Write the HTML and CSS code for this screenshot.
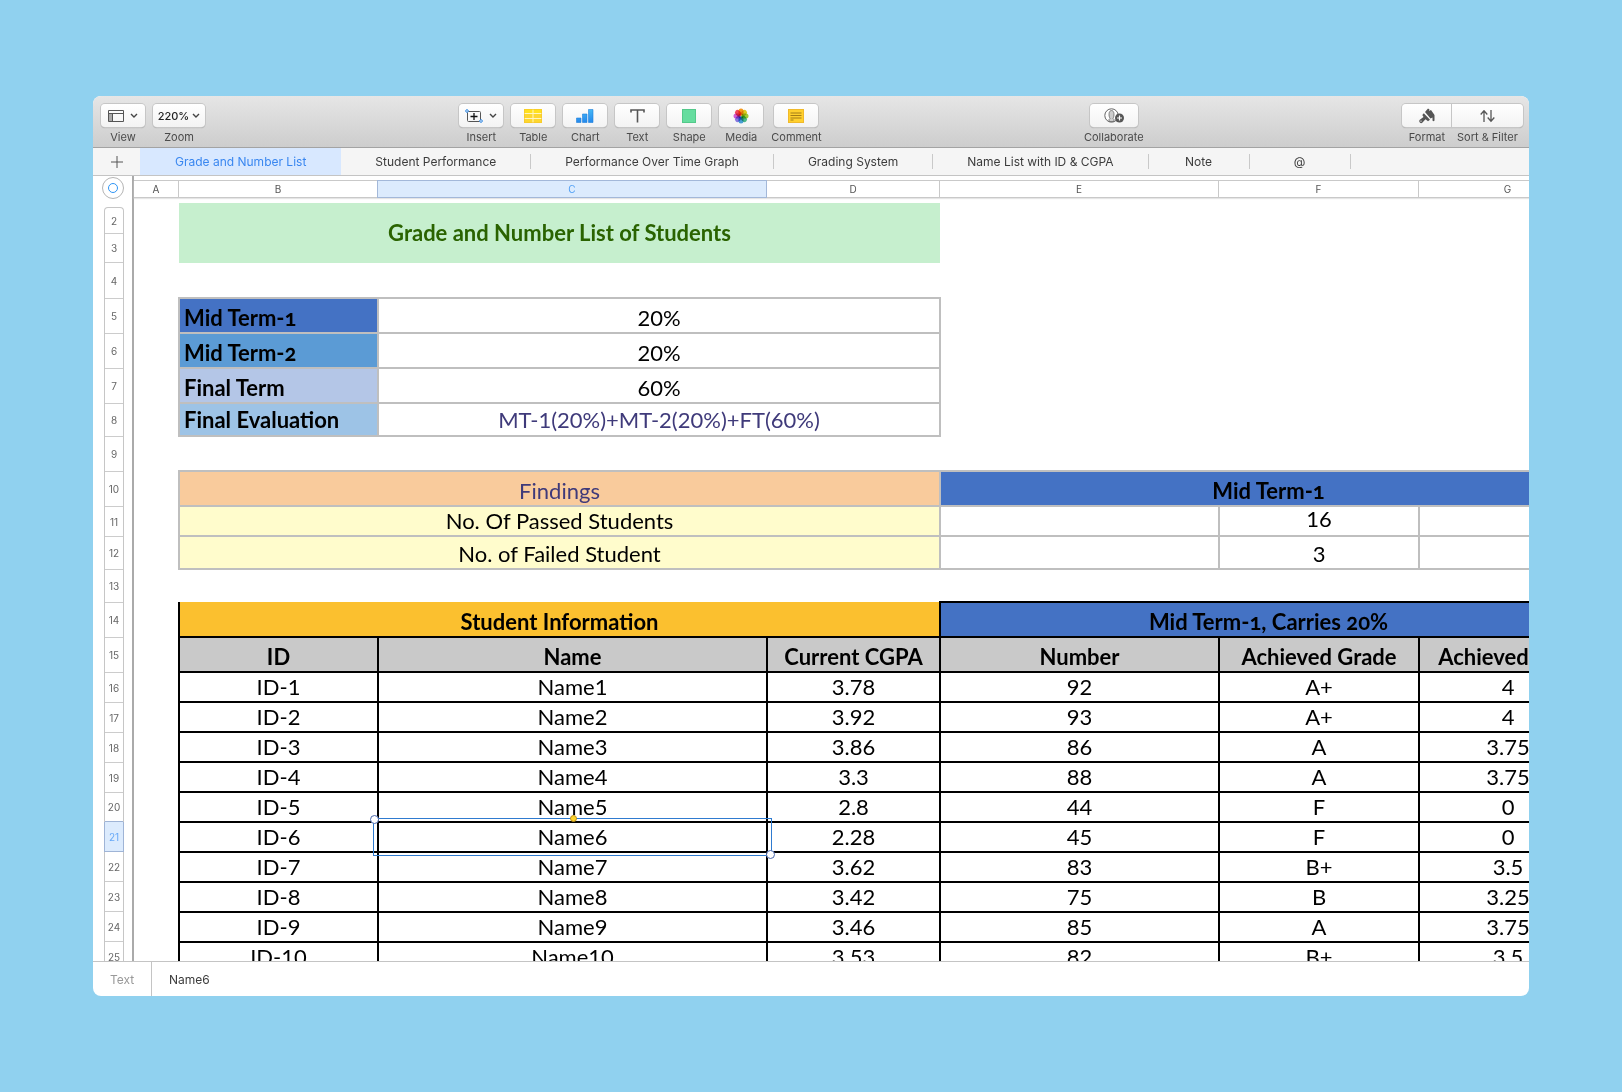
FILE: index.html
```html
<!DOCTYPE html>
<html lang="en">
<head>
    <meta charset="UTF-8">
    <meta name="viewport" content="width=device-width, initial-scale=1.0">
    <title>Grade and Number List</title>
    <link rel="stylesheet" href="styles.css">
</head>
<body>
    <div class="window">
        <header class="toolbar">
            <div class="tool-group">
                <div class="tool">
                    <button class="tool-btn" id="viewBtn" aria-labelledby="viewLabel">
                        <svg width="16" height="12" viewBox="0 0 16 12"><rect x="0.5" y="3" width="4" height="8.5" fill="#aaa"/><path d="M.5 .5h15v11H.5zM.5 3.5h15M4.5 3.5v8" fill="none" stroke="#555"/></svg>
                        <svg width="8" height="6" viewBox="0 0 8 6"><path d="M1 1l3 3 3-3" fill="none" stroke="#444" stroke-width="1.4"/></svg>
                    </button>
                    <span class="tool-label" id="viewLabel">View</span>
                </div>
                <div class="tool">
                    <button class="tool-btn zoom-btn" aria-describedby="zoomLabel">220%
                        <svg width="8" height="6" viewBox="0 0 8 6"><path d="M1 1l3 3 3-3" fill="none" stroke="#444" stroke-width="1.4"/></svg>
                    </button>
                    <span class="tool-label" id="zoomLabel">Zoom</span>
                </div>
            </div>

            <div class="tool-group insert-tools">
                <div class="tool">
                    <button class="tool-btn" aria-labelledby="insertLabel">
                        <svg width="18" height="14" viewBox="0 0 18 14"><rect x="2.5" y="2.5" width="13" height="10" rx="1" fill="none" stroke="#555"/><path d="M9 4v7M5.5 7.5h7" stroke="#111" stroke-width="1.3"/><circle cx="2" cy="2" r="1.3" fill="#fff" stroke="#2f86e0"/><circle cx="16" cy="12" r="1.3" fill="#fff" stroke="#2f86e0"/></svg>
                        <svg width="8" height="6" viewBox="0 0 8 6"><path d="M1 1l3 3 3-3" fill="none" stroke="#444" stroke-width="1.4"/></svg>
                    </button>
                    <span class="tool-label" id="insertLabel">Insert</span>
                </div>
                <div class="tool">
                    <button class="tool-btn" aria-labelledby="tableLabel">
                        <svg width="18" height="14" viewBox="0 0 18 14"><rect width="18" height="14" fill="#fdd72f"/><rect width="18" height="4" fill="#ffe11e"/><path d="M0 4.5h18M0 9.5h18M9 0v14" stroke="#fff6c0"/><path d="M.5 .5h17v13H.5z" fill="none" stroke="#f3c32a" stroke-width=".6"/></svg>
                    </button>
                    <span class="tool-label" id="tableLabel">Table</span>
                </div>
                <div class="tool">
                    <button class="tool-btn" aria-labelledby="chartLabel">
                        <svg width="18" height="14" viewBox="0 0 18 14"><defs><linearGradient id="bar" x1="0" y1="0" x2="0" y2="1"><stop offset="0" stop-color="#45b8f5"/><stop offset="1" stop-color="#2488ec"/></linearGradient></defs><path d="M.5 9H5v4.500H.5zM6.500 5H11v8.500H6.500zM12.500 .5H17v13h-4.500z" fill="url(#bar)" stroke="#1f7fdc" stroke-width=".6"/></svg>
                    </button>
                    <span class="tool-label" id="chartLabel">Chart</span>
                </div>
                <div class="tool">
                    <button class="tool-btn" aria-labelledby="textLabel">
                        <svg width="15" height="14" viewBox="0 0 15 14"><path d="M1 3.5V1h13v2.500M7.500 1v12.500" fill="none" stroke="#555" stroke-width="1.6"/></svg>
                    </button>
                    <span class="tool-label" id="textLabel">Text</span>
                </div>
                <div class="tool">
                    <button class="tool-btn" aria-labelledby="shapeLabel">
                        <svg width="14" height="14" viewBox="0 0 14 14"><rect x=".5" y=".5" width="13" height="13" fill="#66dd9f" stroke="#53c98a"/></svg>
                    </button>
                    <span class="tool-label" id="shapeLabel">Shape</span>
                </div>
                <div class="tool">
                    <button class="tool-btn" aria-labelledby="mediaLabel">
                        <svg class="petals" width="16" height="16" viewBox="-8 -8 16 16">
                            <rect x="-2.500" y="-7.500" width="5" height="7" rx="2.500" fill="#f89a1c"/>
                            <rect x="-2.500" y="-7.500" width="5" height="7" rx="2.500" fill="#e2cf1d" transform="rotate(45)"/>
                            <rect x="-2.500" y="-7.500" width="5" height="7" rx="2.500" fill="#a4d037" transform="rotate(90)"/>
                            <rect x="-2.500" y="-7.500" width="5" height="7" rx="2.500" fill="#4fc08d" transform="rotate(135)"/>
                            <rect x="-2.500" y="-7.500" width="5" height="7" rx="2.500" fill="#4aa5dc" transform="rotate(180)"/>
                            <rect x="-2.500" y="-7.500" width="5" height="7" rx="2.500" fill="#8b7be8" transform="rotate(225)"/>
                            <rect x="-2.500" y="-7.500" width="5" height="7" rx="2.500" fill="#d65fd8" transform="rotate(270)"/>
                            <rect x="-2.500" y="-7.500" width="5" height="7" rx="2.500" fill="#f4485a" transform="rotate(315)"/>
                        </svg>
                    </button>
                    <span class="tool-label" id="mediaLabel">Media</span>
                </div>
                <div class="tool">
                    <button class="tool-btn" aria-labelledby="commentLabel">
                        <svg width="16" height="14" viewBox="0 0 16 14"><rect x=".5" y=".5" width="15" height="13" fill="#ffd02e" stroke="#f0b92a"/><path d="M2.500 4h11M2.500 6.500h11M2.500 9h11M2.500 11h3" stroke="#9a7414" stroke-width=".9"/></svg>
                    </button>
                    <span class="tool-label" id="commentLabel">Comment</span>
                </div>
            </div>

            <div class="tool">
                <button class="tool-btn collab-btn" aria-labelledby="collabLabel">
                    <svg width="20" height="15" viewBox="0 0 20 15"><circle cx="7.500" cy="7.500" r="6.700" fill="#fff" stroke="#666"/><path d="M5 13.500v-2l1-1C4.500 8 4.500 2.500 7.500 2.500s3 5.500 1.500 8l1 1v2z" fill="#ccc" stroke="#666" stroke-width=".8"/><circle cx="15.500" cy="10" r="4.500" fill="#555"/><path d="M15.500 7.500v5M13 10h5" stroke="#fff" stroke-width="1.2"/></svg>
                </button>
                <span class="tool-label" id="collabLabel">Collaborate</span>
            </div>

            <div class="tool-group segmented">
                <div class="tool">
                    <button class="tool-btn" aria-labelledby="formatLabel">
                        <svg width="18" height="16" viewBox="0 0 18 16"><path d="M7 4L10 .5l1.500 1L11 3l2-1 3.500 5v5.500a1.200 1.200 0 0 1-2 0V9.500l-2 1z" fill="#555"/><path d="M5.800 5.200l6.200 6.500-2 1.500-2.500-2-3 3.300a1.900 1.900 0 1 1-2.700-2.700L5.500 9 4.300 7z" fill="#555"/><circle cx="3" cy="13.100" r=".7" fill="#fff"/></svg>
                    </button>
                    <span class="tool-label" id="formatLabel">Format</span>
                </div>
                <div class="tool">
                    <button class="tool-btn" aria-labelledby="sortLabel">
                        <svg width="15" height="14" viewBox="0 0 15 14"><path d="M4 13V2M.7 5.500L4 1.800l3.300 3.700M11 1v11M7.700 8.500l3.300 3.700 3.300-3.700" fill="none" stroke="#555" stroke-width="1.3"/></svg>
                    </button>
                    <span class="tool-label" id="sortLabel">Sort &amp; Filter</span>
                </div>
            </div>
        </header>

        <nav class="tabs">
            <button class="add-sheet" aria-label="Add sheet">
                <svg width="12" height="12" viewBox="0 0 12 12"><path d="M6 0v12M0 6h12" stroke="#555"/></svg>
            </button>
            <button class="tab active">Grade and Number List</button>
            <button class="tab">Student Performance</button>
            <button class="tab">Performance Over Time Graph</button>
            <button class="tab">Grading System</button>
            <button class="tab">Name List with ID &amp; CGPA</button>
            <button class="tab">Note</button>
            <button class="tab">@</button>
        </nav>

        <main class="sheet">
            <aside class="row-side">
                <button class="corner" aria-label="Select table"><span class="ring"></span></button>
                <ol class="row-heads">
                    <li class="h26">2</li>
                    <li class="h29">3</li>
                    <li class="h36">4</li>
                    <li class="h35">5</li>
                    <li class="h35">6</li>
                    <li class="h35">7</li>
                    <li class="h33">8</li>
                    <li class="h35">9</li>
                    <li class="h35">10</li>
                    <li class="h30">11</li>
                    <li class="h33">12</li>
                    <li class="h33">13</li>
                    <li class="h35">14</li>
                    <li class="h35">15</li>
                    <li class="h30">16</li>
                    <li class="h30">17</li>
                    <li class="h30">18</li>
                    <li class="h30">19</li>
                    <li class="h29">20</li>
                    <li class="h30 selected">21</li>
                    <li class="h30">22</li>
                    <li class="h30">23</li>
                    <li class="h30">24</li>
                    <li class="h30">25</li>
                </ol>
            </aside>

            <div class="grid">
                <div class="col-heads">
                    <span>A</span>
                    <span>B</span>
                    <span class="selected">C</span>
                    <span>D</span>
                    <span>E</span>
                    <span>F</span>
                    <span>G</span>
                </div>
                <table class="cells">
                    <colgroup>
                        <col class="col-a">
                        <col class="col-b">
                        <col class="col-c">
                        <col class="col-d">
                        <col class="col-e">
                        <col class="col-f">
                        <col class="col-g">
                    </colgroup>
                    <tbody>
                        <tr class="h30"><td></td><th class="title" colspan="3" rowspan="2">Grade and Number List of Students</th></tr>
                        <tr class="h30"><td></td></tr>
                        <tr class="h35"><td colspan="7"></td></tr>
                    </tbody>
                    <tbody class="weights">
                        <tr class="h35"><td class="blank"></td><th class="mid1">Mid Term-1</th><td colspan="2">20%</td></tr>
                        <tr class="h35"><td class="blank"></td><th class="mid2">Mid Term-2</th><td colspan="2">20%</td></tr>
                        <tr class="h35"><td class="blank"></td><th class="final">Final Term</th><td colspan="2">60%</td></tr>
                        <tr class="h33 middle"><td class="blank"></td><th class="evaluation">Final Evaluation</th><td class="purple" colspan="2">MT-1(20%)+MT-2(20%)+FT(60%)</td></tr>
                    </tbody>
                    <tbody>
                        <tr class="h35"><td colspan="7"></td></tr>
                    </tbody>
                    <tbody class="findings">
                        <tr class="h35"><td class="blank"></td><td class="findings-head purple" colspan="3">Findings</td><th class="mid1-wide" colspan="3">Mid Term-1</th></tr>
                        <tr class="h30"><td class="blank"></td><td class="count" colspan="3">No. Of Passed Students</td><td></td><td class="top">16</td><td></td></tr>
                        <tr class="h33"><td class="blank"></td><td class="count" colspan="3">No. of Failed Student</td><td></td><td>3</td><td></td></tr>
                    </tbody>
                    <tbody>
                        <tr class="h33"><td colspan="7"></td></tr>
                    </tbody>
                    <tbody class="students">
                        <tr class="h35"><td class="blank"></td><th class="info" colspan="3">Student Information</th><th class="mid1-wide" colspan="3">Mid Term-1, Carries 20%</th></tr>
                        <tr class="h35 head-row"><td class="blank"></td><th>ID</th><th>Name</th><th>Current CGPA</th><th>Number</th><th>Achieved Grade</th><th>Achieved GPA</th></tr>
                        <tr class="h30"><td class="blank"></td><td>ID-1</td><td>Name1</td><td>3.78</td><td>92</td><td>A+</td><td>4</td></tr>
                        <tr class="h30"><td class="blank"></td><td>ID-2</td><td>Name2</td><td>3.92</td><td>93</td><td>A+</td><td>4</td></tr>
                        <tr class="h30"><td class="blank"></td><td>ID-3</td><td>Name3</td><td>3.86</td><td>86</td><td>A</td><td>3.75</td></tr>
                        <tr class="h30"><td class="blank"></td><td>ID-4</td><td>Name4</td><td>3.3</td><td>88</td><td>A</td><td>3.75</td></tr>
                        <tr class="h29"><td class="blank"></td><td>ID-5</td><td>Name5</td><td>2.8</td><td>44</td><td>F</td><td>0</td></tr>
                        <tr class="h30"><td class="blank"></td><td>ID-6</td><td class="current">Name6<span class="selection"><span class="fill-handle"></span></span></td><td>2.28</td><td>45</td><td>F</td><td>0</td></tr>
                        <tr class="h30"><td class="blank"></td><td>ID-7</td><td>Name7</td><td>3.62</td><td>83</td><td>B+</td><td>3.5</td></tr>
                        <tr class="h30"><td class="blank"></td><td>ID-8</td><td>Name8</td><td>3.42</td><td>75</td><td>B</td><td>3.25</td></tr>
                        <tr class="h30"><td class="blank"></td><td>ID-9</td><td>Name9</td><td>3.46</td><td>85</td><td>A</td><td>3.75</td></tr>
                        <tr class="h30"><td class="blank"></td><td>ID-10</td><td>Name10</td><td>3.53</td><td>82</td><td>B+</td><td>3.5</td></tr>
                    </tbody>
                </table>
            </div>
        </main>

        <footer class="cell-bar">
            <label for="cellValue">Text</label>
            <input type="text" id="cellValue" value="Name6">
        </footer>
    </div>
</body>
</html>
```
FILE: styles.css
```css
* { margin: 0; padding: 0; box-sizing: border-box; }
body {
    font-family: Inter, sans-serif;
    font-size: 12px;
    color: #3c3c3c;
    background: #90d1ef;
    height: 100vh;
    display: flex;
    padding: 96px 93px;
}
button { font: inherit; color: inherit; border: none; background: none; }
.window {
    flex: 1;
    min-width: 0;
    display: flex;
    flex-direction: column;
    background: #fff;
    border-radius: 8px;
    overflow: hidden;
}

/* toolbar */
.toolbar {
    display: flex;
    justify-content: space-between;
    padding: 8px 6px 3px 8px;
    background: linear-gradient(#e6e6e6, #cdcdcd);
    border-bottom: 1px solid #a3a3a3;
}
.tool-group { display: flex; gap: 8px; }
.insert-tools { margin: 0 4px 0 -4px; }
.tool { display: flex; flex-direction: column; align-items: center; gap: 3px; }
.tool-btn {
    display: flex;
    align-items: center;
    justify-content: center;
    gap: 6px;
    min-width: 44px;
    height: 23px;
    background: linear-gradient(#fff, #f3f3f3);
    border-radius: 4px;
    box-shadow: 0 0 0 1px #c6c6c6, 0 1px 1px #999;
}
.zoom-btn { gap: 3px; width: 52px; font-size: 11px; font-weight: 500; color: #222; }
.collab-btn { width: 48px; }
.tool-label { font-size: 11px; line-height: 14px; color: #4a4a4a; }
.segmented { gap: 0; }
.segmented .tool-btn { width: 100%; }
.segmented .tool { width: 50px; }
.segmented .tool + .tool { width: 71px; }
.segmented .tool:first-child .tool-btn { border-radius: 4px 0 0 4px; }
.segmented .tool:last-child .tool-btn { border-radius: 0 4px 4px 0; }
.petals rect { mix-blend-mode: multiply; }

/* sheet tabs */
.tabs {
    display: flex;
    align-items: center;
    height: 28px;
    background: #f5f5f5;
    border-bottom: 1px solid #c4c4c4;
}
.add-sheet {
    display: flex;
    align-items: center;
    justify-content: center;
    width: 47px;
    height: 26px;
}
.tab {
    min-width: 101px;
    height: 15px;
    padding: 0 34px;
    line-height: 15px;
    white-space: nowrap;
    border-right: 1px solid #c9c9c9;
}
.tab.active {
    height: 27px;
    padding: 0 35px;
    color: #3a87f0;
    background: #d8e8ff;
    border: none;
}

/* sheet */
.sheet { flex: 1; min-height: 0; display: flex; overflow: hidden; }
.row-side { flex: none; width: 39px; padding-left: 9px; }
.corner {
    display: flex;
    align-items: center;
    justify-content: center;
    width: 22px;
    height: 22px;
    margin: 1px 0 8px;
    border: 1px solid #b5b5b5;
    border-radius: 50%;
}
.ring { width: 10px; height: 10px; border: 1px solid #2f95f5; border-radius: 50%; }
.row-heads {
    width: 20px;
    margin-left: 2px;
    list-style: none;
    border: 1px solid #c6c6c6;
    border-bottom: none;
    border-radius: 4px 4px 0 0;
    font-size: 10px;
    color: #666;
}
.row-heads li {
    display: flex;
    align-items: center;
    justify-content: center;
    border-bottom: 1px solid #ccc;
}
.row-heads .selected {
    color: #67a9f7;
    background: #dcebfd;
    border-color: #9fb4d6;
    box-shadow: 0 -1px #9fb4d6, -1px 0 #9fb4d6, 1px 0 #9fb4d6;
}
.h26 { height: 26px; }
.h29 { height: 29px; }
.h30 { height: 30px; }
.h33 { height: 33px; }
.h35 { height: 35px; }
.h36 { height: 36px; }

.grid { flex: 1; min-width: 0; border-left: 2px solid #aaa; }
.col-heads {
    display: grid;
    grid-template-columns: 45px 199px 389px 173px 279px 200px 178px;
    height: 18px;
    margin: 4px 0 5px;
    font-size: 10px;
    line-height: 16px;
    text-align: center;
    color: #555;
    box-shadow: 0 1px 1px #e5e5e5;
}
.col-heads span { border: solid #c9c9c9; border-width: 1px 1px 1px 0; }
.col-heads .selected {
    color: #4f9ff5;
    background: #dcebfd;
    border-color: #a3b8d9;
    box-shadow: -1px 0 #a3b8d9;
}

.cells {
    width: 1463px;
    table-layout: fixed;
    border-collapse: collapse;
    font-family: Lato, sans-serif;
    font-size: 22px;
    line-height: 28px;
    color: #000;
    text-align: center;
}
.col-a { width: 45px; }
.col-b { width: 199px; }
.col-c { width: 389px; }
.col-d { width: 173px; }
.col-e { width: 279px; }
.col-f { width: 200px; }
.col-g { width: 178px; }
.cells td, .cells th { vertical-align: bottom; white-space: nowrap; }
.cells th { font-variant-numeric: oldstyle-nums; }
.cells .title { vertical-align: middle; color: #2a6300; background: #c6efce; }
.cells .middle td, .cells .middle th { vertical-align: middle; }
.cells .top { vertical-align: top; line-height: 24px; }
.purple { color: #3f3a7a; }

.weights td, .weights th, .findings td, .findings th { border: 2px solid #bfbfbf; }
.students td, .students th { border: 2px solid #000; }
.cells .blank { border-width: 0; }
.weights th { padding-left: 4px; text-align: left; }
.mid1, .mid1-wide { background: #4472c4; }
.mid2 { background: #5b9bd5; }
.final { background: #b4c6e7; }
.evaluation { background: #9dc3e6; }
.findings-head { background: #f9cb9c; }
.count { background: #fffccc; }
.students .info { background: #fbc02f; border-top: none; }
.head-row th { background: #c9c9c9; }

.current { position: relative; }
.selection { position: absolute; inset: -5px -6px; border: 1px solid #2f7bd0; }
.selection::before, .selection::after, .fill-handle {
    content: "";
    position: absolute;
    width: 7px;
    height: 7px;
    border: 1px solid #4a67ad;
    border-radius: 50%;
    background: #fff;
}
.selection::before { top: -4px; left: -4px; }
.selection::after { right: -4px; bottom: -4px; }
.fill-handle {
    top: -4px;
    left: calc(50% - 3px);
    border-color: #b98d1c;
    background: #fdd42a;
}

/* cell value bar */
.cell-bar {
    display: flex;
    height: 35px;
    line-height: 36px;
    border-top: 1px solid #c4c4c4;
}
.cell-bar label {
    width: 59px;
    text-align: center;
    color: #999;
    border-right: 1px solid #c4c4c4;
}
.cell-bar input {
    flex: 1;
    padding: 2px 17px 0;
    border: none;
    font: inherit;
    color: #3c3c3c;
    background: none;
}
```
